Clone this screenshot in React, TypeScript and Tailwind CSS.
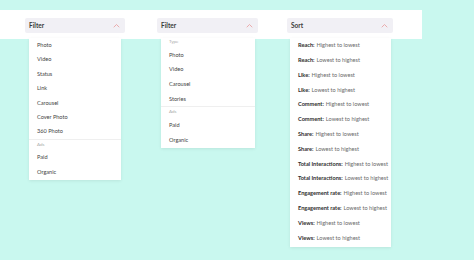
import React from 'react';

type Item = { bold?: string; text: string };
type Group = { label?: string; items: Item[] };

function Chevron() {
  return (
    <svg width="7" height="5" viewBox="0 0 7 5" className="shrink-0">
      <polyline points="1,4 3.5,1.5 6,4" fill="none" stroke="#e89a9a" strokeWidth="0.8" strokeLinecap="round" strokeLinejoin="round" />
    </svg>
  );
}

interface DropdownProps {
  title: string;
  width: string;
  panelClass: string;
  rowClass: string;
  groups: Group[];
}

function Dropdown({ title, width, panelClass, rowClass, groups }: DropdownProps) {
  return (
    <div className={`relative ${width}`}>
      <button className="flex h-[15px] w-full items-center justify-between rounded-[2px] bg-[#f1f0f5] pl-[4px] pr-[5px]">
        <span className="text-[6.5px] font-bold text-[#3a3a3a]">{title}</span>
        <Chevron />
      </button>
      <div className={`absolute top-[20px] bg-white shadow-[0_1px_3px_rgba(0,0,0,0.08)] ${panelClass}`}>
        {groups.map((g, gi) => (
          <div key={gi} className={gi > 0 ? 'border-t border-[#efefef]' : ''}>
            {g.label && (
              <div className={`flex items-center pl-[8px] text-[4.5px] text-[#aaaaaa] ${gi > 0 ? 'h-[10.5px]' : 'h-[9.5px]'}`}>
                {g.label}
              </div>
            )}
            {g.items.map((it, ii) => (
              <div key={ii} className={`flex items-center pl-[8px] text-[5.6px] whitespace-nowrap ${rowClass}`}>
                {it.bold && <span className="font-bold text-[#2e2e2e] mr-[2px]">{it.bold}</span>}
                <span className={it.bold ? 'text-[#6a6a6a]' : 'text-[#444444]'}>{it.text}</span>
              </div>
            ))}
          </div>
        ))}
      </div>
    </div>
  );
}

const sortPairs = ['Reach', 'Like', 'Comment', 'Share', 'Total Interactions', 'Engagement rate', 'Views'];

export default function App() {
  const sortItems: Item[] = sortPairs.flatMap((k) => [
    { bold: `${k}:`, text: 'Highest to lowest' },
    { bold: `${k}:`, text: 'Lowest to highest' },
  ]);

  return (
    <div className="h-[260px] w-[474px] bg-[#c9f8ef] pt-[10px]" style={{ fontFamily: 'Lato, "Open Sans", sans-serif' }}>
      <div className="flex h-[29px] w-[422px] items-start bg-white pl-[25px] pt-[8px]">
        <Dropdown
          title="Filter"
          width="w-[100px]"
          panelClass="left-[4px] w-[92px] pb-[1px]"
          rowClass="h-[14.4px]"
          groups={[
            { items: ['Photo', 'Video', 'Status', 'Link', 'Carousel', 'Cover Photo', '360 Photo'].map((t) => ({ text: t })) },
            { label: 'Ads', items: [{ text: 'Paid' }, { text: 'Organic' }] },
          ]}
        />
        <div className="w-[32px]" />
        <Dropdown
          title="Filter"
          width="w-[101px]"
          panelClass="left-[4px] w-[94px] pb-[1px]"
          rowClass="h-[14.7px]"
          groups={[
            { label: 'Type', items: ['Photo', 'Video', 'Carousel', 'Stories'].map((t) => ({ text: t })) },
            { label: 'Ads', items: [{ text: 'Paid' }, { text: 'Organic' }] },
          ]}
        />
        <div className="w-[29px]" />
        <Dropdown
          title="Sort"
          width="w-[106px]"
          panelClass="left-[3px] w-[101px] pb-[2px]"
          rowClass="h-[14.8px]"
          groups={[{ items: sortItems }]}
        />
      </div>
    </div>
  );
}
